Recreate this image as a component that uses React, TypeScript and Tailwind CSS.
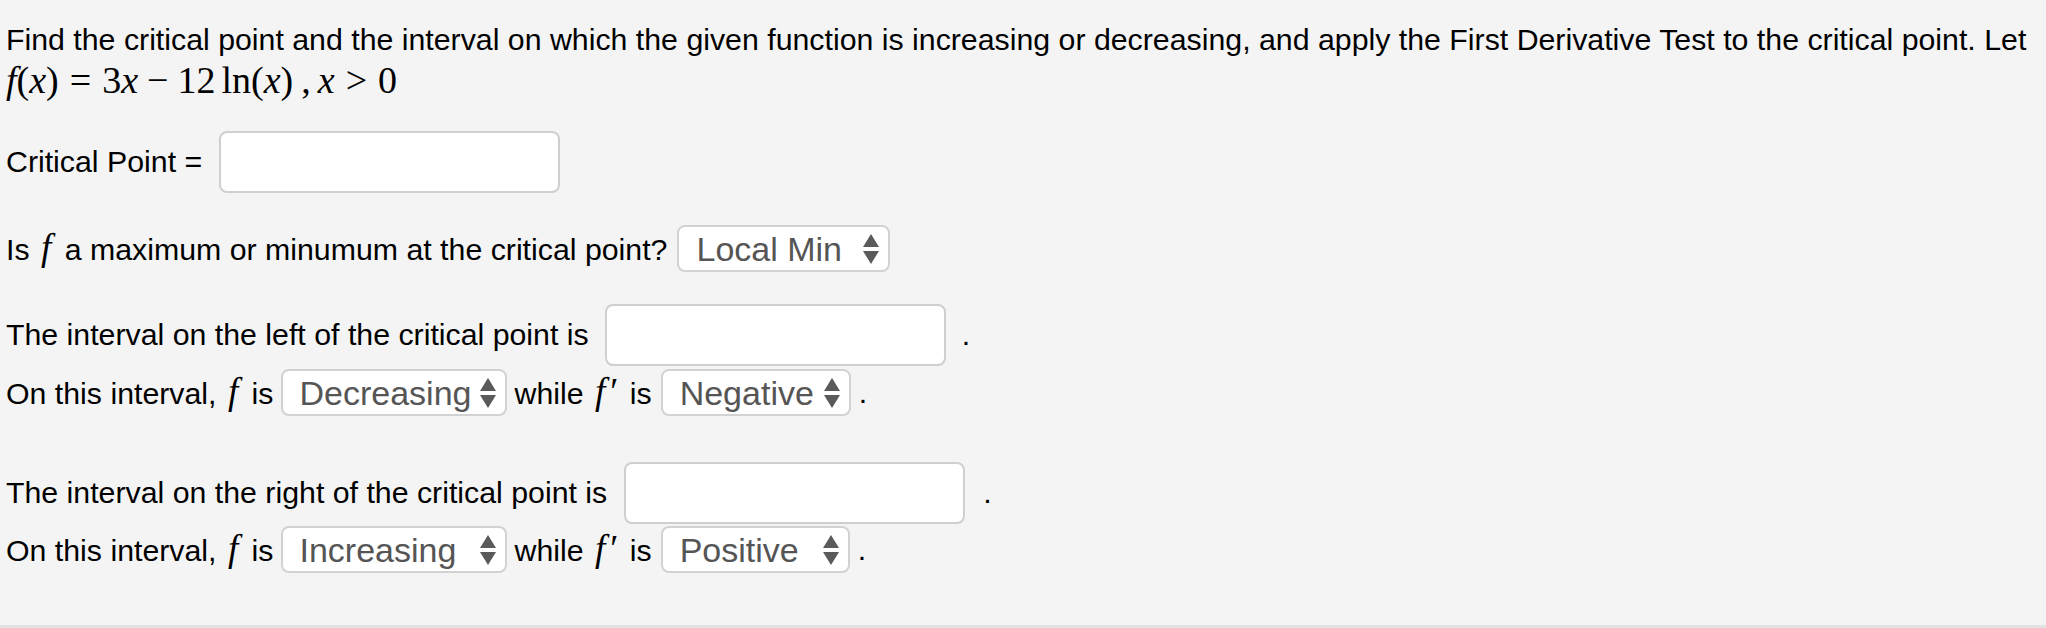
import React from "react";

function Arrows() {
  return (
    <svg width="16" height="30" viewBox="0 0 16 30" className="shrink-0">
      <polygon points="8,0 16,13 0,13" fill="#5a5a5a" />
      <polygon points="0,17 16,17 8,30" fill="#5a5a5a" />
    </svg>
  );
}

function Sel({ label, w }: { label: string; w: string }) {
  return (
    <div
      className={`${w} h-[47px] flex items-center justify-between pl-[17px] pr-[9px] bg-white border-2 border-[#d2d2d2] rounded-[8px] text-[34px] leading-none text-[#555555]`}
    >
      <span>{label}</span>
      <Arrows />
    </div>
  );
}

function Box() {
  return <div className="w-[341px] h-[62px] bg-white border-2 border-[#cfcfcf] rounded-[8px] shrink-0" />;
}

function MF() {
  return <span className="font-['Liberation_Serif',serif] italic text-[37px] leading-none ml-[3px] mr-[5px]">f</span>;
}

function MFp() {
  return (
    <span className="font-['Liberation_Serif',serif] text-[37px] leading-none ml-[3px] mr-[3px]">
      <span className="italic">f</span>
      <span className="ml-[5px]">′</span>
    </span>
  );
}

export default function App() {
  return (
    <div className="h-[628px] w-[2046px] bg-[#f4f4f4] border-b-[3px] border-[#e2e2e2] font-['Liberation_Sans',Arial,sans-serif] text-black">
      <div className="pl-[6px] pt-[22px] flex flex-col">
        <p className="text-[30.3px] leading-[36px] whitespace-nowrap">
          Find the critical point and the interval on which the given function is increasing or decreasing, and apply the First Derivative Test to the critical point. Let
        </p>
        <div className="h-[44px] flex items-center font-['Liberation_Serif',serif] text-[38px] leading-[44px] whitespace-nowrap">
          <span className="italic">f</span>
          <span>(</span>
          <span className="italic">x</span>
          <span>)</span>
          <span className="mx-[11px]">=</span>
          <span>3</span>
          <span className="italic">x</span>
          <span className="mx-[9px]">−</span>
          <span>12</span>
          <span className="ml-[6px]">ln</span>
          <span>(</span>
          <span className="italic">x</span>
          <span>)</span>
          <span className="ml-[8px]">,</span>
          <span className="italic ml-[7px]">x</span>
          <span className="mx-[11px]">&gt;</span>
          <span>0</span>
        </div>

        <div className="mt-[29px] h-[62px] flex items-center text-[30.3px] leading-[36px] whitespace-nowrap">
          <span>Critical Point =</span>
          <div className="ml-[17px]">
            <Box />
          </div>
        </div>

        <div className="mt-[32px] h-[47px] flex items-center text-[30.3px] leading-[36px] whitespace-nowrap">
          <span>
            Is <MF /> a maximum or minumum at the critical point?
          </span>
          <div className="ml-[10px]">
            <Sel label="Local Min" w="w-[213px]" />
          </div>
        </div>

        <div className="mt-[32px] h-[62px] flex items-center text-[30.3px] leading-[36px] whitespace-nowrap">
          <span>The interval on the left of the critical point is</span>
          <div className="ml-[16px]">
            <Box />
          </div>
          <span className="ml-[16px]">.</span>
        </div>

        <div className="mt-[3px] h-[47px] flex items-center text-[30.3px] leading-[36px] whitespace-nowrap">
          <span>
            On this interval, <MF /> is
          </span>
          <div className="ml-[7px]">
            <Sel label="Decreasing" w="w-[226px]" />
          </div>
          <span className="ml-[8px]">
            while <MFp /> is
          </span>
          <div className="ml-[9px]">
            <Sel label="Negative" w="w-[190px]" />
          </div>
          <span className="ml-[8px]">.</span>
        </div>

        <div className="mt-[46px] h-[62px] flex items-center text-[30.3px] leading-[36px] whitespace-nowrap">
          <span>The interval on the right of the critical point is</span>
          <div className="ml-[17px]">
            <Box />
          </div>
          <span className="ml-[18px]">.</span>
        </div>

        <div className="mt-[2px] h-[47px] flex items-center text-[30.3px] leading-[36px] whitespace-nowrap">
          <span>
            On this interval, <MF /> is
          </span>
          <div className="ml-[7px]">
            <Sel label="Increasing" w="w-[226px]" />
          </div>
          <span className="ml-[8px]">
            while <MFp /> is
          </span>
          <div className="ml-[9px]">
            <Sel label="Positive" w="w-[189px]" />
          </div>
          <span className="ml-[8px]">.</span>
        </div>
      </div>
    </div>
  );
}
